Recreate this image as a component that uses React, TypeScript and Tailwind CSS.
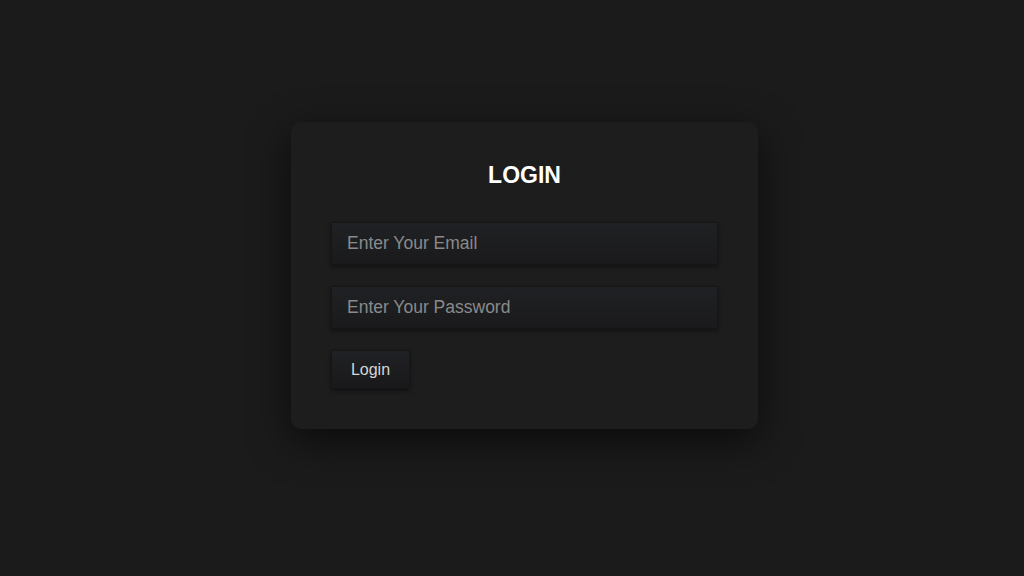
import React from 'react';

export default function App() {
    return (
        <div
            className="min-h-screen w-full bg-[#1b1b1b] flex justify-center pl-[25px] pt-[122px]"
            style={{ fontFamily: "'Liberation Sans', Arial, sans-serif" }}
        >
            <div className="w-[467px] h-[307px] rounded-[10px] bg-[#1d1d1d] px-10 pt-[38px] pb-10 shadow-[0_12px_40px_rgba(0,0,0,0.6)] flex flex-col">
                <h1 className="text-[23px] leading-[30px] font-bold text-white text-center">LOGIN</h1>

                <input
                    type="email"
                    placeholder="Enter Your Email"
                    className="mt-[32px] h-[43px] w-full border border-[#161616] bg-gradient-to-b from-[#202124] to-[#1a1a1c] pl-[15px] pr-4 text-[17.5px] text-[#cfcfcf] placeholder:text-[#8a8a8a] shadow-[0_2px_4px_rgba(0,0,0,0.4)] outline-none"
                />
                <input
                    type="password"
                    placeholder="Enter Your Password"
                    className="mt-[21px] h-[43px] w-full border border-[#161616] bg-gradient-to-b from-[#202124] to-[#1a1a1c] pl-[15px] pr-4 text-[17.5px] text-[#cfcfcf] placeholder:text-[#8a8a8a] shadow-[0_2px_4px_rgba(0,0,0,0.4)] outline-none"
                />

                <div className="mt-[21px]">
                    <button className="h-[39px] w-[79px] rounded-[2px] border border-[#161616] bg-gradient-to-b from-[#202124] to-[#19191b] text-[16px] text-[#d6d6d6] shadow-[0_2px_4px_rgba(0,0,0,0.45)]">
                        Login
                    </button>
                </div>
            </div>
        </div>
    );
}
